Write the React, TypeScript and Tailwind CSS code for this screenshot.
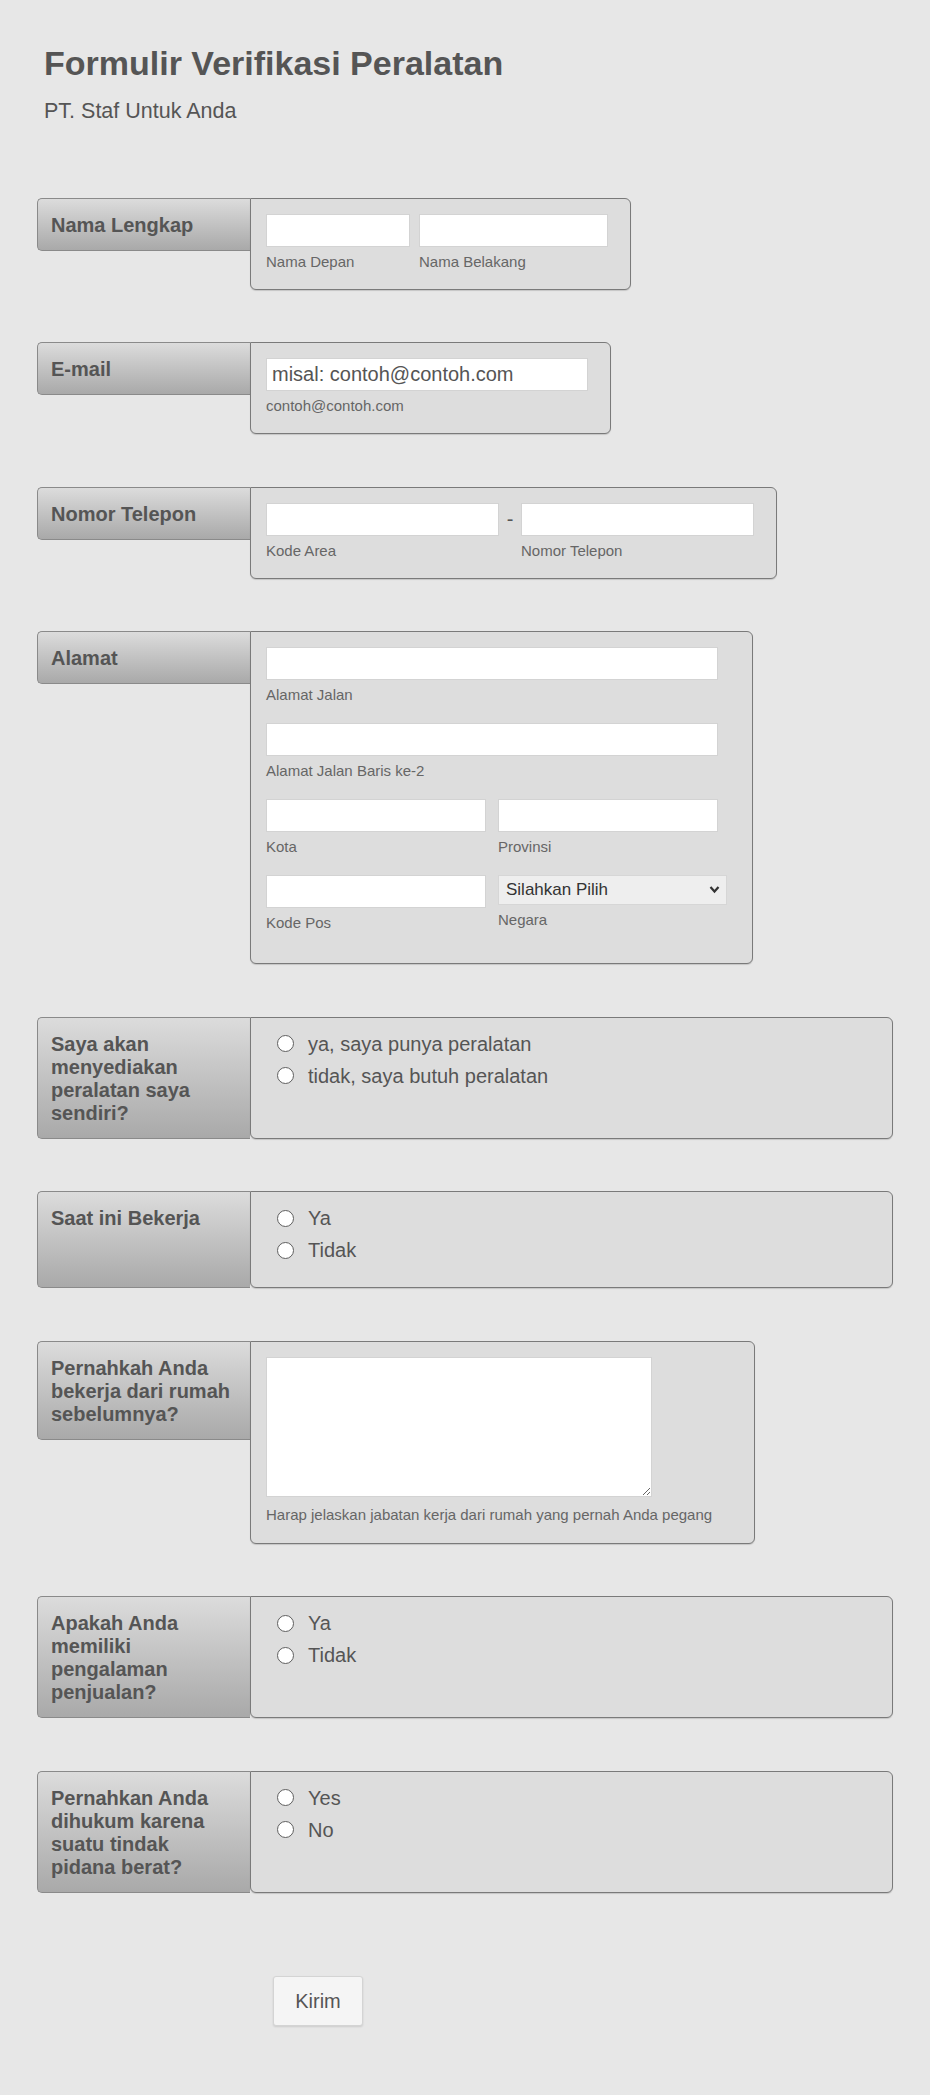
import React from "react";

const FONT = "font-['Liberation_Sans',Arial,sans-serif]";

function Label({ children }: { children: React.ReactNode }) {
  return (
    <div className="w-[213px] shrink-0 rounded-l-[5px] border border-r-0 border-[#8a8a8a] bg-gradient-to-b from-[#dcdcdc] to-[#a9a9a9] pt-[15px] pr-[15px] pb-[13px] pl-[13px]">
      <div className="text-[20px] leading-[23px] font-bold text-[#555]">{children}</div>
    </div>
  );
}

function Box({ width, className = "", children }: { width: string; className?: string; children: React.ReactNode }) {
  return (
    <div
      className={`${width} rounded-r-[6px] rounded-bl-[6px] border border-[#7a7a7a] bg-[#dddddd] shadow-[0_1px_1px_rgba(0,0,0,0.15)] ${className}`}
    >
      {children}
    </div>
  );
}

function Sub({ children, className = "mt-[6px]" }: { children: React.ReactNode; className?: string }) {
  return <div className={`${className} text-[15px] leading-[17px] text-[#666]`}>{children}</div>;
}

function TextInput({ width, placeholder }: { width: string; placeholder?: string }) {
  return (
    <input
      type="text"
      placeholder={placeholder}
      className={`${width} block h-[33px] border border-[#d3d3d3] bg-white px-[5px] text-[20px] text-[#555] outline-none placeholder:text-[#555]`}
    />
  );
}

function Field({ width, sub, placeholder }: { width: string; sub: string; placeholder?: string }) {
  return (
    <div>
      <TextInput width={width} placeholder={placeholder} />
      <Sub>{sub}</Sub>
    </div>
  );
}

function RadioGroup({ name, options }: { name: string; options: string[] }) {
  return (
    <div className="pt-[10px] pb-[21px] pl-[26px]">
      {options.map((o) => (
        <label key={o} className="flex h-[32px] items-center gap-[14px] text-[20px] text-[#555]">
          <input
            type="radio"
            name={name}
            className="h-[17px] w-[17px] shrink-0 appearance-none rounded-full border border-[#5f5f5f] bg-white"
          />
          <span>{o}</span>
        </label>
      ))}
    </div>
  );
}

function RadioSection({ label, name, options }: { label: React.ReactNode; name: string; options: string[] }) {
  return (
    <div className="flex items-stretch">
      <Label>{label}</Label>
      <Box width="w-[643px]">
        <RadioGroup name={name} options={options} />
      </Box>
    </div>
  );
}

export default function App() {
  return (
    <div className={`${FONT} min-h-screen bg-[#e7e7e7] pt-[46px] pb-[67px]`}>
      <div className="pl-[44px]">
        <h1 className="text-[34px] leading-none font-bold text-[#555]">Formulir Verifikasi Peralatan</h1>
        <p className="mt-[21px] text-[21.5px] leading-none text-[#555]">PT. Staf Untuk Anda</p>
      </div>

      <form className="mt-[75px] flex flex-col gap-[52.5px] pl-[37px]" onSubmit={(e) => e.preventDefault()}>
        {/* nama */}
        <div className="flex items-start">
          <Label>Nama Lengkap</Label>
          <Box width="w-[381px]" className="px-[15px] pt-[15px] pb-[19px]">
            <div className="flex gap-[9px]">
              <Field width="w-[144px]" sub="Nama Depan" />
              <Field width="w-[189px]" sub="Nama Belakang" />
            </div>
          </Box>
        </div>

        {/* email */}
        <div className="flex items-start">
          <Label>E-mail</Label>
          <Box width="w-[361px]" className="px-[15px] pt-[15px] pb-[19px]">
            <Field width="w-[322px]" sub="contoh@contoh.com" placeholder="misal: contoh@contoh.com" />
          </Box>
        </div>

        {/* telepon */}
        <div className="flex items-start">
          <Label>Nomor Telepon</Label>
          <Box width="w-[527px]" className="px-[15px] pt-[15px] pb-[19px]">
            <div className="flex">
              <Field width="w-[233px]" sub="Kode Area" />
              <div className="flex h-[33px] w-[22px] items-center justify-center text-[20px] text-[#555]">-</div>
              <Field width="w-[233px]" sub="Nomor Telepon" />
            </div>
          </Box>
        </div>

        {/* alamat */}
        <div className="flex items-start">
          <Label>Alamat</Label>
          <Box width="w-[503px]" className="px-[15px] pt-[15px] pb-[32px]">
            <div className="flex flex-col gap-[20px]">
              <Field width="w-[452px]" sub="Alamat Jalan" />
              <Field width="w-[452px]" sub="Alamat Jalan Baris ke-2" />
              <div className="flex gap-[12px]">
                <Field width="w-[220px]" sub="Kota" />
                <Field width="w-[220px]" sub="Provinsi" />
              </div>
              <div className="flex gap-[12px]">
                <Field width="w-[220px]" sub="Kode Pos" />
                <div>
                  <div className="relative w-[229px]">
                    <select className="block h-[30px] w-[229px] appearance-none border border-[#d6d6d6] bg-[#eeeeee] pl-[7px] text-[17px] text-[#333] outline-none">
                      <option>Silahkan Pilih</option>
                      <option>Indonesia</option>
                    </select>
                    <svg
                      className="pointer-events-none absolute top-[10px] right-[7px]"
                      width="11"
                      height="9"
                      viewBox="0 0 11 9"
                    >
                      <path d="M1.5 2 L5.5 6.5 L9.5 2" fill="none" stroke="#333" strokeWidth="2.2" />
                    </svg>
                  </div>
                  <Sub>Negara</Sub>
                </div>
              </div>
            </div>
          </Box>
        </div>

        <RadioSection
          label="Saya akan menyediakan peralatan saya sendiri?"
          name="peralatan"
          options={["ya, saya punya peralatan", "tidak, saya butuh peralatan"]}
        />

        <RadioSection label="Saat ini Bekerja" name="bekerja" options={["Ya", "Tidak"]} />

        {/* textarea */}
        <div className="flex items-start">
          <Label>Pernahkah Anda bekerja dari rumah sebelumnya?</Label>
          <Box width="w-[505px]" className="px-[15px] pt-[15px] pb-[20px]">
            <textarea className="block h-[140px] w-[386px] resize border border-[#d3d3d3] bg-white p-[5px] text-[17px] text-[#555] outline-none" />
            <Sub className="mt-[9px]">Harap jelaskan jabatan kerja dari rumah yang pernah Anda pegang</Sub>
          </Box>
        </div>

        <RadioSection label="Apakah Anda memiliki pengalaman penjualan?" name="penjualan" options={["Ya", "Tidak"]} />

        <RadioSection label="Pernahkan Anda dihukum karena suatu tindak pidana berat?" name="pidana" options={["Yes", "No"]} />

        <div className="mt-[31px] pl-[236px]">
          <button
            type="submit"
            className="h-[50px] w-[90px] rounded-[3px] border border-[#d4d4d4] bg-[#f5f5f5] text-[20px] text-[#555] shadow-[0_1px_2px_rgba(0,0,0,0.12)]"
          >
            Kirim
          </button>
        </div>
      </form>
    </div>
  );
}
